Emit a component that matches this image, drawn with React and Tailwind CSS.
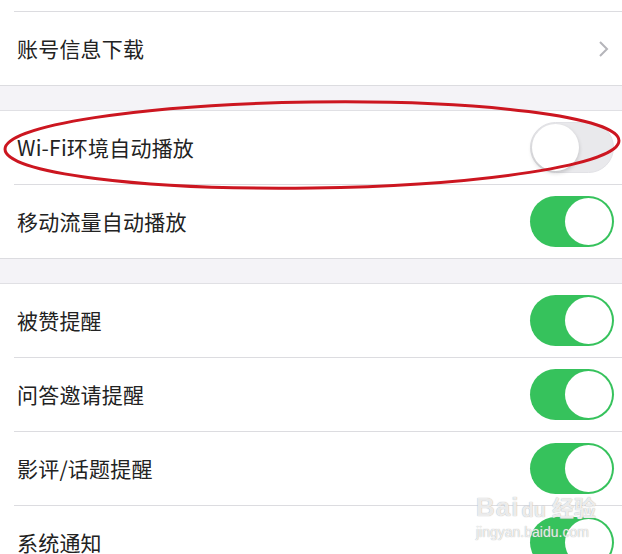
import React from 'react';

const FONT = { fontFamily: '"Noto Sans CJK SC", "Noto Sans", sans-serif' };

function Toggle({ on }) {
  if (on) {
    return (
      <div className="w-[84px] h-[51px] rounded-full bg-[#36c25c] flex items-center justify-end pr-[2px]">
        <div className="w-[47px] h-[47px] rounded-full bg-white" />
      </div>
    );
  }
  return (
    <div className="w-[84px] h-[51px] rounded-full bg-[#e9e9ec] border border-[#e2e2e6] flex items-center pl-[1px]">
      <div className="w-[47px] h-[47px] rounded-full bg-white shadow-[0_2px_4px_rgba(0,0,0,0.18)]" />
    </div>
  );
}

function Row({ label, right, last }) {
  return (
    <div className="h-[74px] bg-white flex flex-col">
      <div className="flex-1 flex items-center justify-between pl-[17px] pr-[8px]">
        <span className="text-[21px] text-[#222] tracking-[0.2px]">{label}</span>
        {right}
      </div>
      <div className={last ? 'h-px bg-[#dcdce0]' : 'h-px bg-[#dcdce0] ml-[14px]'} />
    </div>
  );
}

function Chevron() {
  return (
    <svg width="12" height="18" viewBox="0 0 12 18" className="mr-[4px]">
      <path d="M2 2 L9 9 L2 16" fill="none" stroke="#b5b5ba" strokeWidth="2" />
    </svg>
  );
}

export default function App() {
  return (
    <div className="relative w-[622px] h-[554px] overflow-hidden bg-[#f4f3f7]" style={FONT}>
      <div className="h-[12px] bg-white flex flex-col justify-end">
        <div className="h-px bg-[#dcdce0] ml-[14px]" />
      </div>
      <Row label="账号信息下载" right={<Chevron />} last />
      <div className="h-[25px] border-b border-[#e0e0e4]" />
      <Row label="Wi-Fi环境自动播放" right={<Toggle on={false} />} />
      <Row label="移动流量自动播放" right={<Toggle on />} last />
      <div className="h-[25px] border-b border-[#e0e0e4]" />
      <Row label="被赞提醒" right={<Toggle on />} />
      <Row label="问答邀请提醒" right={<Toggle on />} />
      <Row label="影评/话题提醒" right={<Toggle on />} />
      <Row label="系统通知" right={<Toggle on />} />

      {/* red annotation ellipse */}
      <svg className="absolute left-0 top-0 pointer-events-none" width="622" height="554">
        <ellipse cx="312" cy="145" rx="307" ry="43" fill="none" stroke="#cc1620" strokeWidth="3" transform="rotate(-0.8 312 145)" />
      </svg>

      {/* watermark */}
      <div className="absolute left-[476px] top-[494px] pointer-events-none text-white/80 leading-none" style={{ fontFamily: '"Liberation Sans", "Noto Sans CJK SC", sans-serif' }}>
        <div className="flex items-end gap-[2px]">
          <span className="text-[26px] font-bold tracking-[1px] [text-shadow:0_0_1px_#999]">Bai</span>
          <span className="text-[20px] font-bold [text-shadow:0_0_1px_#999]">du</span>
          <span className="text-[22px] font-bold ml-[4px] [text-shadow:0_0_1px_#999]">经验</span>
        </div>
        <div className="text-[14px] mt-[5px] [text-shadow:0_0_1px_#999]">jingyan.baidu.com</div>
      </div>
    </div>
  );
}
